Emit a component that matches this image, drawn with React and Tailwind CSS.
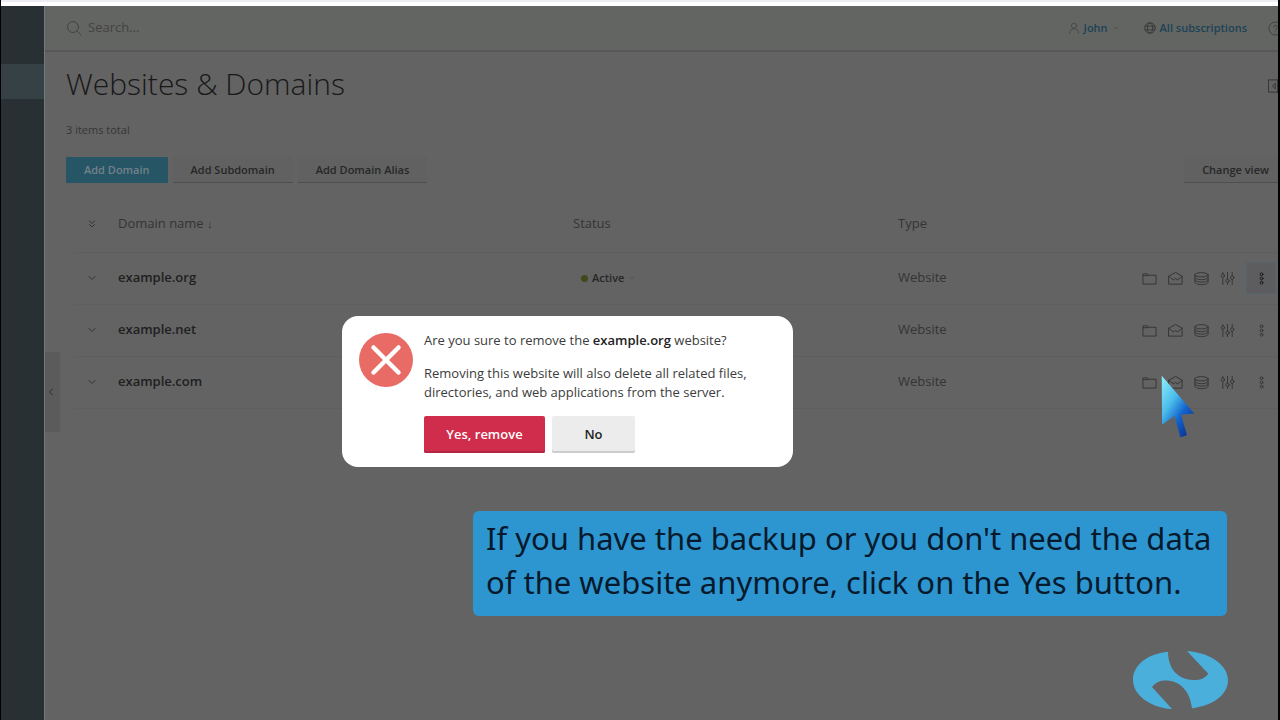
import React from 'react';
import { ChevronDown, ChevronLeft, ChevronsDown } from 'lucide-react';

const domains = [
  { name: 'example.org', active: true },
  { name: 'example.net', active: false },
  { name: 'example.com', active: false },
];

// Thin outline icon shared by the toolbar and the row actions
const Icon = ({ children, className = 'size-[15px]' }) => (
  <svg
    viewBox="0 0 16 16"
    className={className}
    fill="none"
    stroke="currentColor"
    strokeWidth="1"
    strokeLinecap="round"
    strokeLinejoin="round"
    aria-hidden="true"
  >
    {children}
  </svg>
);

const FolderIcon = () => (
  <Icon>
    <path d="M1 13.5V3h4.5l1 1.5h8.5v9zM1.5 5h5" />
  </Icon>
);

const MailIcon = () => (
  <Icon>
    <path d="M1 5.500l7-4 7 4v8.500H1zM1 5.500l4.500 4L8 8l2.500 1.500L15 5.500" />
  </Icon>
);

const DatabaseIcon = () => (
  <Icon>
    <ellipse cx="8" cy="4" rx="7" ry="2.300" />
    <path d="M1 4v8c0 1.300 3 2.500 7 2.500s7-1.200 7-2.500V4M1 6.700C1 8 4 9.200 8 9.200s7-1.200 7-2.500M1 9.400c0 1.300 3 2.500 7 2.500s7-1.200 7-2.500" />
  </Icon>
);

const SlidersIcon = () => (
  <Icon>
    <path d="M3 7v7.500M3 1.500V3M8 1.500v7M8 12.500v2M13 1.500V5M13 9v5.500" />
    <circle cx="3" cy="5" r="1.800" />
    <circle cx="8" cy="10.500" r="1.800" />
    <circle cx="13" cy="7" r="1.800" />
  </Icon>
);

const MoreIcon = () => (
  <Icon>
    <circle cx="8" cy="3.500" r="1.500" />
    <circle cx="8" cy="8" r="1.500" />
    <circle cx="8" cy="12.500" r="1.500" />
  </Icon>
);

const rowActions = [
  { label: 'Files', Glyph: FolderIcon },
  { label: 'Mail', Glyph: MailIcon },
  { label: 'Databases', Glyph: DatabaseIcon },
  { label: 'Settings', Glyph: SlidersIcon },
];

const TopBar = () => (
  <header className="flex h-[46px] shrink-0 items-center border-b-2 border-[#585858] bg-[#636563] pl-[21px]">
    <label className="flex items-center gap-[6px] text-[#434343]">
      <Icon className="size-4">
        <circle cx="7" cy="7" r="5.500" />
        <path d="M11 11l4 4" />
      </Icon>
      <input
        type="text"
        aria-label="Search"
        placeholder="Search..."
        className="w-48 bg-transparent text-[13px] outline-none placeholder:text-[#434343]"
      />
    </label>
    <nav className="-mr-[5px] ml-auto flex items-center text-[11px] font-semibold text-[#1b4356]">
      <button type="button" className="flex items-center gap-1">
        <span className="text-[#404040]">
          <Icon className="size-3">
            <circle cx="8" cy="5" r="3.500" />
            <path d="M2 15c0-4 3-6 6-6s6 2 6 6" />
          </Icon>
        </span>
        John
        <ChevronDown className="size-2 text-[#444444]" />
      </button>
      <a href="#subscriptions" className="ml-6 flex items-center gap-1 whitespace-nowrap">
        <span className="text-[#303030]">
          <Icon className="size-3">
            <circle cx="8" cy="8" r="7" />
            <ellipse cx="8" cy="8" rx="3.500" ry="7" />
            <path d="M1.500 5.500h13M1.500 10.500h13" />
          </Icon>
        </span>
        All subscriptions
      </a>
      <button type="button" aria-label="Help" className="ml-[21px] text-[#404040]">
        <Icon>
          <circle cx="8" cy="8" r="7" />
          <path d="M6 6.500C6 3.500 10.500 4 10 6.500C9.800 7.700 8 8 8 9.500M8 11.500v.3" />
        </Icon>
      </button>
    </nav>
  </header>
);

const ToolButton = ({ children }) => (
  <button
    type="button"
    className="h-[26px] whitespace-nowrap bg-[#616161] px-[18px] text-[11px] font-semibold text-[#272727] shadow-[inset_0_-1px_#4f4f4f]"
  >
    {children}
  </button>
);

const DomainTable = () => (
  <table className="ml-2 mt-[17px] w-full table-fixed text-left text-[13px] text-[#343434]">
    <colgroup>
      <col className="w-[44px]" />
      <col className="w-[455px]" />
      <col className="w-[325px]" />
      <col className="w-[244px]" />
      <col />
    </colgroup>
    <thead>
      <tr className="h-[52px] border-b border-[#5e5e5e]">
        <th className="pb-1 pl-3">
          <ChevronsDown className="size-3" />
        </th>
        <th className="pb-1 font-normal">
          Domain name <span className="text-[11px]">↓</span>
        </th>
        <th className="pb-1 font-normal">Status</th>
        <th className="pb-1 font-normal">Type</th>
        <th aria-label="Actions" />
      </tr>
    </thead>
    <tbody>
      {domains.map((domain) => (
        <tr key={domain.name} className="h-[52px] border-b border-[#5e5e5e]">
          <td className="pl-3">
            <button type="button" aria-label="Expand" className="block">
              <ChevronDown className="size-3" />
            </button>
          </td>
          <td className="font-semibold text-[#202020]">{domain.name}</td>
          <td>
            {domain.active && (
              <button
                type="button"
                className="flex items-center gap-1 pl-2 text-[11px] font-semibold text-[#272727]"
              >
                <span className="size-[7px] rounded-full bg-[#3f4a17]" />
                Active
                <ChevronDown className="size-2 text-[#505050]" />
              </button>
            )}
          </td>
          <td>Website</td>
          <td>
            <div className="flex items-center gap-[11px] text-[#343434]">
              {rowActions.map(({ label, Glyph }) => (
                <button key={label} type="button" aria-label={label}>
                  <Glyph />
                </button>
              ))}
              <button
                type="button"
                aria-label="More"
                className={
                  domain.active
                    ? 'flex h-8 w-[30px] shrink-0 items-center justify-center border border-[#53646c] bg-[#5d5d5f] text-[#161616]'
                    : 'flex h-8 w-[30px] shrink-0 items-center justify-center'
                }
              >
                <MoreIcon />
              </button>
            </div>
          </td>
        </tr>
      ))}
    </tbody>
  </table>
);

const ConfirmDialog = () => (
  <div
    role="dialog"
    aria-label="Remove website"
    className="absolute left-[341px] top-[316px] flex w-[451px] gap-[11px] rounded-2xl bg-white px-[17px] pb-[14px] pt-[15px] text-[13px] text-[#3c3c3c]"
  >
    <svg viewBox="0 0 54 54" className="mt-[2px] size-[54px] shrink-0" aria-hidden="true">
      <circle cx="27" cy="27" r="27" fill="#e86b66" />
      <path d="M14.500 14.500l25 25M39.500 14.500l-25 25" stroke="#fff" strokeWidth="4.500" strokeLinecap="round" />
    </svg>
    <div>
      <p className="leading-[19px]">
        Are you sure to remove the <strong className="font-semibold text-[#222222]">example.org</strong> website?
      </p>
      <p className="mt-[14px] leading-[19px]">
        Removing this website will also delete all related files, directories, and web applications from the server.
      </p>
      <div className="mt-[14px] flex gap-[7px]">
        <button
          type="button"
          className="h-[37px] w-[121px] rounded-xs bg-[#d02c4b] font-semibold text-white shadow-[inset_0_-2px_#b02643]"
        >
          Yes, remove
        </button>
        <button
          type="button"
          className="h-[37px] w-[83px] rounded-xs bg-[#ececec] font-semibold text-[#222222] shadow-[inset_0_-2px_#cccccc]"
        >
          No
        </button>
      </div>
    </div>
  </div>
);

const Pointer = () => (
  <svg viewBox="244 406 102 190" className="absolute left-[1160px] top-[375px] h-[63px] w-[34px]" aria-hidden="true">
    <defs>
      <linearGradient id="pointerFill" x1="0" y1="0" x2="0.8" y2="1">
        <stop offset="0" stopColor="#8ff0f8" />
        <stop offset="0.4" stopColor="#4cbdeb" />
        <stop offset="0.68" stopColor="#1263cc" />
        <stop offset="1" stopColor="#0a2d8c" />
      </linearGradient>
    </defs>
    <path d="M246 408L344 522L304 526L322 588L302 594L284 530L247 556Z" fill="url(#pointerFill)" />
  </svg>
);

const BrandMark = () => (
  <svg viewBox="99 64 285 174" className="absolute left-[1132px] top-[651px] h-[58px] w-[95px]" aria-hidden="true">
    <path
      fill="#4bafdc"
      d="M204 66C140 72 99 108 99 150C99 195 148 233 216 238L156 172Q165 158 185 153C235 147 270 180 276 236C340 228 384 195 384 152C384 108 335 70 261 64L325 132Q312 150 290 151C240 152 205 125 204 66Z"
    />
  </svg>
);

export default function App() {
  return (
    <div className="relative flex min-h-screen flex-col overflow-hidden border-l border-r-2 border-black bg-[#636363] font-['Open_Sans',sans-serif]">
      <div className="h-[6px] shrink-0 border-t-2 border-[#ececf3] bg-white" />
      <div className="flex flex-1">
        <aside className="w-[43px] shrink-0 bg-[#293034] pt-[58px]">
          <div className="h-[35px] bg-[#364146]" />
        </aside>
        <div className="relative flex min-w-0 flex-1 flex-col border-l border-[#707a80]">
          <TopBar />
          <button
            type="button"
            aria-label="Collapse sidebar"
            className="absolute left-0 top-[346px] flex h-20 w-[15px] items-center bg-[#5b5b5b] text-[#2a2a2a]"
          >
            <ChevronLeft className="size-3" />
          </button>
          <main className="flex flex-1 flex-col pl-[21px]">
            <div className="flex items-center justify-between pt-3">
              <h1 className="text-[30px] font-light leading-10 text-[#181818]">Websites &amp; Domains</h1>
              <button type="button" aria-label="Toggle side panel" className="-mr-1 pt-1 text-[#303030]">
                <Icon className="size-[14px]">
                  <path d="M1 1h14v14H1zM8 5L5 8l3 3zM11 1v14" />
                </Icon>
              </button>
            </div>
            <p className="mt-[18px] text-[11px] leading-4 text-[#363636]">3 items total</p>
            <div className="-mr-[9px] mt-[19px] flex gap-[5px]">
              <button
                type="button"
                className="h-[26px] whitespace-nowrap bg-[#265566] px-[18px] text-[11px] font-semibold text-[#738188]"
              >
                Add Domain
              </button>
              <ToolButton>Add Subdomain</ToolButton>
              <ToolButton>Add Domain Alias</ToolButton>
              <div className="ml-auto flex">
                <ToolButton>Change view</ToolButton>
              </div>
            </div>
            <DomainTable />
          </main>
        </div>
      </div>
      <ConfirmDialog />
      <Pointer />
      <p className="absolute left-[472px] top-[511px] w-[754px] whitespace-nowrap rounded-md bg-[#2d96d1] pb-[12px] pl-[13px] pt-[5px] font-['Noto_Sans',sans-serif] text-[31px] leading-[44px] text-[#071a2c]">
        If you have the backup or you don't need the data
        <br />
        of the website anymore, click on the Yes button.
      </p>
      <BrandMark />
    </div>
  );
}
